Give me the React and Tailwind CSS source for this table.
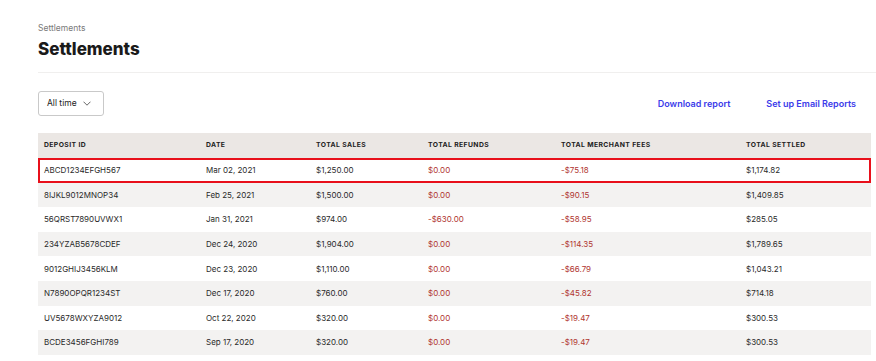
import React from "react";

const rows = [
  ["ABCD1234EFGH567", "Mar 02, 2021", "$1,250.00", "$0.00", "-$75.18", "$1,174.82"],
  ["8IJKL9012MNOP34", "Feb 25, 2021", "$1,500.00", "$0.00", "-$90.15", "$1,409.85"],
  ["56QRST7890UVWX1", "Jan 31, 2021", "$974.00", "-$630.00", "-$58.95", "$285.05"],
  ["234YZAB5678CDEF", "Dec 24, 2020", "$1,904.00", "$0.00", "-$114.35", "$1,789.65"],
  ["9012GHIJ3456KLM", "Dec 23, 2020", "$1,110.00", "$0.00", "-$66.79", "$1,043.21"],
  ["N7890OPQR1234ST", "Dec 17, 2020", "$760.00", "$0.00", "-$45.82", "$714.18"],
  ["UV5678WXYZA9012", "Oct 22, 2020", "$320.00", "$0.00", "-$19.47", "$300.53"],
  ["BCDE3456FGHI789", "Sep 17, 2020", "$320.00", "$0.00", "-$19.47", "$300.53"],
];

const cols = "grid grid-cols-[162px_110px_112px_133px_185px_1fr]";

export default function App() {
  return (
    <div className="w-[876px] h-[361px] bg-white overflow-hidden text-[#1a1a1a]" style={{ fontFamily: "Inter, 'Liberation Sans', sans-serif" }}>
      <div className="pl-[38px] pt-[22px]">
        <div className="text-[8.5px] leading-[12px] text-[#7a7a7a]">Settlements</div>
        <div className="text-[17px] leading-[22px] font-extrabold mt-[4px]">Settlements</div>
        <div className="h-[1px] bg-[#f0efee] mt-[12px]" />
        <div className="flex items-center justify-between mt-[18px] pr-[20px]">
          <button className="h-[25px] w-[66px] px-[8px] border border-[#c9c9c9] rounded-[3px] flex items-center gap-[6px] text-[8.5px] text-[#222]">
            All time
            <svg width="8" height="5" viewBox="0 0 8 5" fill="none"><path d="M0.5 0.7L4 4.2L7.5 0.7" stroke="#555" strokeWidth="0.9" /></svg>
          </button>
          <div className="flex gap-[36px] text-[9px] font-semibold text-[#3b3bea]">
            <span>Download report</span>
            <span>Set up Email Reports</span>
          </div>
        </div>
        <div className="mt-[17px] w-[833px]">
          <div className={`${cols} bg-[#ebe7e4] h-[25px] items-center text-[6.8px] font-bold tracking-[0.4px] text-[#222]`}>
            {["DEPOSIT ID", "DATE", "TOTAL SALES", "TOTAL REFUNDS", "TOTAL MERCHANT FEES", "TOTAL SETTLED"].map((h) => (
              <div key={h} className="pl-[6px]">{h}</div>
            ))}
          </div>
          {rows.map((r, i) => (
            <div
              key={r[0]}
              className={`${cols} items-center text-[8px] h-[24.6px] ${i === 0 ? "border-[2px] border-[#e8101b]" : ""} ${i % 2 === 1 ? "bg-[#f3f2f1]" : "bg-white"}`}
            >
              {r.map((c, j) => (
                <div key={j} className={`${i === 0 ? "pl-[4px]" : "pl-[6px]"} ${j === 3 || j === 4 ? "text-[#b0352f]" : "text-[#2a2a2a]"}`}>{c}</div>
              ))}
            </div>
          ))}
        </div>
      </div>
    </div>
  );
}
